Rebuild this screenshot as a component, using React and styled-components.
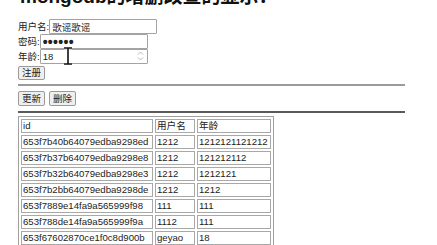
import * as React from 'react';
import styled, { createGlobalStyle } from 'styled-components';

const GlobalStyle = createGlobalStyle`
  html, body {
    margin: 0;
    padding: 0;
    overflow: hidden;
    background: #fff;
  }
  body {
    font-family: "Liberation Sans", "Noto Sans CJK SC", sans-serif;
    color: #111;
  }
`;

const rows = [
  { id: '653f7b40b64079edba9298ed', name: '1212', age: '1212121121212' },
  { id: '653f7b37b64079edba9298e8', name: '1212', age: '121212112' },
  { id: '653f7b32b64079edba9298e3', name: '1212', age: '1212121' },
  { id: '653f7b2bb64079edba9298de', name: '1212', age: '1212' },
  { id: '653f7889e14fa9a565999f98', name: '111', age: '111' },
  { id: '653f788de14fa9a565999f9a', name: '1112', age: '111' },
  { id: '653f67602870ce1f0c8d900b', name: 'geyao', age: '18' }
];

class App extends React.Component {
  render() {
    return (
      <Page>
        <GlobalStyle />
        <Title>mongodb的增删改查的显示：</Title>
        <Form>
          <Row>
            <Label>用户名:</Label>
            <Field type="text" defaultValue="歌谣歌谣" />
          </Row>
          <Row>
            <Label>密码:</Label>
            <Field type="password" defaultValue="123456" $secret />
          </Row>
          <Row>
            <Label>年龄:</Label>
            <FieldWrap>
              <Field type="text" defaultValue="18" />
              <Spinner width="7" height="10" viewBox="0 0 7 10">
                <path d="M1 3.5 L3.5 1 L6 3.5" fill="none" stroke="#b5b5b5" strokeWidth="1" />
                <path d="M1 6.5 L3.5 9 L6 6.5" fill="none" stroke="#b5b5b5" strokeWidth="1" />
              </Spinner>
              <Cursor width="10" height="18" viewBox="0 0 10 18">
                <path d="M1 1 H9 M5 1 V17 M1 17 H9" fill="none" stroke="#fff" strokeWidth="3" />
                <path d="M1 1 H9 M5 1 V17 M1 17 H9" fill="none" stroke="#111" strokeWidth="1.6" />
              </Cursor>
            </FieldWrap>
          </Row>
          <Button $top={2}>注册</Button>
        </Form>
        <Rule $top={4} $color="#9a9a9a" />
        <Actions>
          <Button>更新</Button>
          <Button>删除</Button>
        </Actions>
        <Rule $top={5} $color="#5a5a5a" />
        <Table>
          <tbody>
            <tr>
              <Cell $w={128}>id</Cell>
              <Cell $w={36}>用户名</Cell>
              <Cell $w={70}>年龄</Cell>
            </tr>
            {rows.map((r) => (
              <tr key={r.id}>
                <Cell>{r.id}</Cell>
                <Cell>{r.name}</Cell>
                <Cell>{r.age}</Cell>
              </tr>
            ))}
          </tbody>
        </Table>
      </Page>
    );
  }
}

const Page = styled.div`
  padding: 0 0 0 18px;
  width: 387px;
`;

const Title = styled.h1`
  margin: -14px 0 0 2px;
  font-size: 19px;
  line-height: 22px;
  font-weight: bold;
  color: #111;
  white-space: nowrap;
`;

const Form = styled.div`
  margin-top: 11px;
  display: flex;
  flex-direction: column;
  align-items: flex-start;
`;

const Row = styled.div`
  display: flex;
  align-items: center;
  height: 15px;
`;

const Label = styled.span`
  font-size: 9.5px;
  line-height: 15px;
  color: #222;
  white-space: nowrap;
`;

const FieldWrap = styled.div`
  position: relative;
  display: flex;
`;

const Field = styled.input`
  box-sizing: border-box;
  width: 108px;
  height: 15px;
  margin: 0;
  padding: 0 2px;
  border: 1px solid #a3a3a3;
  border-radius: 1px;
  font-family: "Liberation Sans", "Noto Sans CJK SC", sans-serif;
  font-size: ${(p) => (p.$secret ? '14px' : '9.5px')};
  letter-spacing: ${(p) => (p.$secret ? '0.3px' : '0')};
  font-weight: ${(p) => (p.$secret ? 'bold' : 'normal')};
  color: #222;
  outline: none;
`;

const Spinner = styled.svg`
  position: absolute;
  right: 4px;
  top: 2px;
`;

const Cursor = styled.svg`
  position: absolute;
  left: 23px;
  top: -2px;
`;

const Button = styled.button`
  box-sizing: border-box;
  margin: ${(p) => p.$top || 0}px 0 0 0;
  height: ${(p) => (p.$top ? 14 : 15)}px;
  padding: 0 3px;
  border: 1px solid #9a9a9a;
  border-radius: 2px;
  background: #efefef;
  font-family: "Liberation Sans", "Noto Sans CJK SC", sans-serif;
  font-size: 9.5px;
  line-height: 12px;
  color: #222;
`;

const Rule = styled.div`
  margin-top: ${(p) => p.$top}px;
  height: 2px;
  background: ${(p) => p.$color};
`;

const Actions = styled.div`
  display: flex;
  gap: 4px;
  margin-top: 5px;
`;

const Table = styled.table`
  margin-top: 3px;
  border: 1px solid #a0a0a0;
  border-spacing: 2px;
  font-size: 9.6px;
  color: #222;
`;

const Cell = styled.td`
  width: ${(p) => (p.$w ? `${p.$w}px` : 'auto')};
  height: 12px;
  padding: 0 1px;
  border: 1px solid #a8a8a8;
  line-height: 12px;
  white-space: nowrap;
  font-family: "Liberation Sans", "Noto Sans CJK SC", sans-serif;
`;

export default App;
